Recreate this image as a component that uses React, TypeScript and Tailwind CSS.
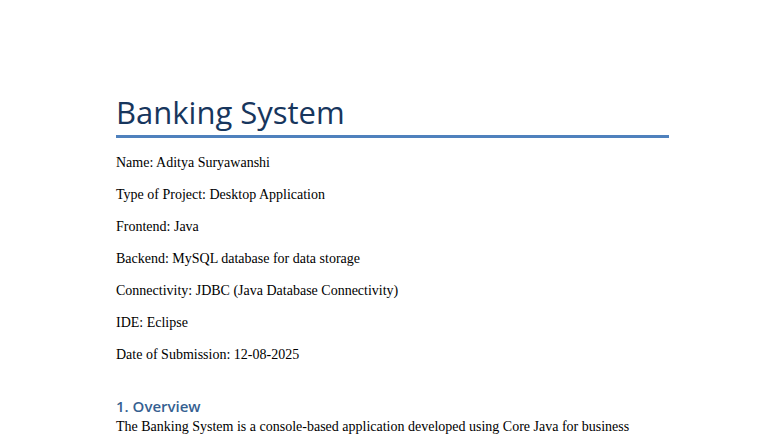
export default function App() {
  const lines = [
    "Name: Aditya Suryawanshi",
    "Type of Project: Desktop Application",
    "Frontend: Java",
    "Backend: MySQL database for data storage",
    "Connectivity: JDBC (Java Database Connectivity)",
    "IDE: Eclipse",
    "Date of Submission: 12-08-2025",
  ];
  return (
    <div className="w-[784px] h-[441px] overflow-hidden bg-white">
      <div className="ml-[116px] w-[553px] pt-[92px]">
        <div className="text-[31px] leading-[40px] text-[#17365d]" style={{ fontFamily: '"Open Sans", sans-serif' }}>
          Banking System
        </div>
        <div className="h-[3px] bg-[#4f81bd] mt-[3px]" />
        <div className="mt-[16px] flex flex-col gap-[14px]" style={{ fontFamily: '"Liberation Serif", serif' }}>
          {lines.map((l) => (
            <div key={l} className="text-[14px] leading-[18px] text-black">{l}</div>
          ))}
        </div>
        <div className="mt-[32px] text-[15px] leading-[20px] font-semibold text-[#365f91]" style={{ fontFamily: '"Open Sans", sans-serif' }}>
          1. Overview
        </div>
        <div className="mt-[2px] text-[14px] leading-[18px] text-black whitespace-nowrap" style={{ fontFamily: '"Liberation Serif", serif' }}>
          The Banking System is a console-based application developed using Core Java for business
        </div>
      </div>
    </div>
  );
}
